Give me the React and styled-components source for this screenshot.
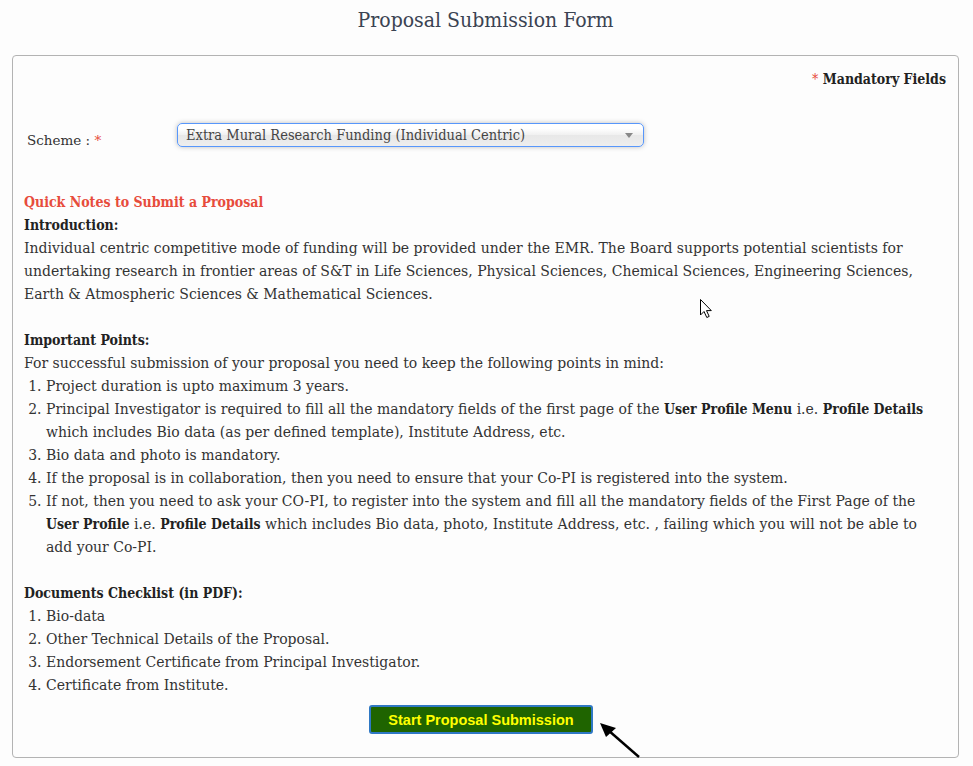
import React from 'react';
import styled, { createGlobalStyle } from 'styled-components';

const GlobalStyle = createGlobalStyle`
  html, body {
    margin: 0;
    padding: 0;
    background: #fdfdfd;
  }
  body {
    font-family: "DejaVu Serif", "Liberation Serif", serif;
    color: #333;
  }
`;

const Page = styled.div`
  position: relative;
  width: 973px;
  height: 766px;
  overflow: hidden;
  padding: 0 14px 0 12px;
  box-sizing: border-box;
`;

const Title = styled.h1`
  margin: 0;
  padding-top: 8px;
  height: 55px;
  box-sizing: border-box;
  text-align: center;
  font-size: 21px;
  font-weight: normal;
  font-stretch: condensed;
  color: #3b4352;
`;

const Panel = styled.div`
  border: 1px solid #b3b3b3;
  border-radius: 4px;
  padding: 12px 14px 0 11px;
  background: #fdfdfd;
  height: 703px;
  box-sizing: border-box;
`;

const MandatoryNote = styled.div`
  text-align: right;
  margin-right: -2px;
  font-size: 14px;
  line-height: 22px;
  font-weight: bold;
  font-stretch: condensed;
  color: #222;
`;

const Star = styled.span`
  color: #e74c3c;
  font-weight: normal;
`;

const SchemeRow = styled.div`
  display: flex;
  align-items: flex-start;
  margin-top: 33px;
  height: 68px;
`;

const Label = styled.label`
  width: 150px;
  padding-left: 3px;
  padding-top: 9px;
  font-size: 13.5px;
  color: #333;
`;

const Select = styled.div`
  width: 467px;
  height: 24px;
  box-sizing: border-box;
  display: flex;
  align-items: center;
  justify-content: space-between;
  padding: 0 10px 0 8px;
  border: 1px solid #5897fb;
  border-radius: 5px;
  background: linear-gradient(#ffffff 20%, #f0f0f0 50%, #e8e8e8 52%, #eeeeee 100%);
  box-shadow: 0 0 5px rgba(0, 0, 0, 0.25);
  font-size: 14.5px;
  font-stretch: condensed;
  color: #444;
`;

const Caret = styled.span`
  width: 0;
  height: 0;
  border-left: 4px solid transparent;
  border-right: 4px solid transparent;
  border-top: 5px solid #888;
`;

const Notes = styled.div`
  font-size: 14px;
  line-height: 23px;
  color: #333;

  b {
    color: #222;
    font-stretch: condensed;
  }
`;

const NotesTitle = styled.div`
  color: #e74c3c;
  font-weight: bold;
  font-stretch: condensed;
`;

const Heading = styled.div`
  font-weight: bold;
  font-stretch: condensed;
  color: #222;
  margin-top: ${p => (p.$gap ? '23px' : '0')};
`;

const Para = styled.p`
  margin: 0;
`;

const List = styled.ol`
  margin: 0;
  padding-left: 22px;
`;

const Item = styled.li``;

const ButtonRow = styled.div`
  display: flex;
  justify-content: center;
  margin-top: 8px;
  padding-right: 6px;
`;

const StartButton = styled.button`
  width: 224px;
  height: 29px;
  background: #1f6400;
  color: #ffff00;
  border: 2px solid #2f78c4;
  border-radius: 3px;
  font-family: "Liberation Sans", Arial, sans-serif;
  font-weight: bold;
  font-size: 14.5px;
  cursor: pointer;
`;

const Overlay = styled.svg`
  position: absolute;
  pointer-events: none;
`;

export default function App() {
  return (
    <>
      <GlobalStyle />
      <Page>
        <Title>Proposal Submission Form</Title>
        <Panel>
          <MandatoryNote>
            <Star>*</Star> Mandatory Fields
          </MandatoryNote>
          <SchemeRow>
            <Label>
              Scheme : <Star>*</Star>
            </Label>
            <Select>
              <span>Extra Mural Research Funding (Individual Centric)</span>
              <Caret />
            </Select>
          </SchemeRow>
          <Notes>
            <NotesTitle>Quick Notes to Submit a Proposal</NotesTitle>
            <Heading>Introduction:</Heading>
            <Para>
              Individual centric competitive mode of funding will be provided under the EMR. The Board
              supports potential scientists for undertaking research in frontier areas of S&amp;T in Life
              Sciences, Physical Sciences, Chemical Sciences, Engineering Sciences, Earth &amp; Atmospheric
              Sciences &amp; Mathematical Sciences.
            </Para>
            <Heading $gap>Important Points:</Heading>
            <Para>For successful submission of your proposal you need to keep the following points in mind:</Para>
            <List>
              <Item>Project duration is upto maximum 3 years.</Item>
              <Item>
                Principal Investigator is required to fill all the mandatory fields of the first page of the{' '}
                <b>User Profile Menu</b> i.e. <b>Profile Details</b> which includes Bio data (as per defined
                template), Institute Address, etc.
              </Item>
              <Item>Bio data and photo is mandatory.</Item>
              <Item>
                If the proposal is in collaboration, then you need to ensure that your Co-PI is registered into
                the system.
              </Item>
              <Item>
                If not, then you need to ask your CO-PI, to register into the system and fill all the mandatory
                fields of the First Page of the <b>User Profile</b> i.e. <b>Profile Details</b> which includes
                Bio data, photo, Institute Address, etc. , failing which you will not be able to add your Co-PI.
              </Item>
            </List>
            <Heading $gap>Documents Checklist (in PDF):</Heading>
            <List>
              <Item>Bio-data</Item>
              <Item>Other Technical Details of the Proposal.</Item>
              <Item>Endorsement Certificate from Principal Investigator.</Item>
              <Item>Certificate from Institute.</Item>
            </List>
          </Notes>
          <ButtonRow>
            <StartButton>Start Proposal Submission</StartButton>
          </ButtonRow>
        </Panel>
        <Overlay style={{ left: 699, top: 298 }} width="16" height="22" viewBox="0 0 16 22">
          <path d="M1.5 1.5 L1.5 17 L5 13.5 L7.8 19.5 L10.2 18.4 L7.5 12.6 L12.3 12.6 Z" fill="#fff" stroke="#000" strokeWidth="1" strokeLinejoin="round" />
        </Overlay>
        <Overlay style={{ left: 596, top: 718 }} width="46" height="42" viewBox="0 0 46 42">
          <line x1="43" y1="39" x2="12" y2="12" stroke="#000" strokeWidth="2.4" />
          <path d="M4 5 L20 10 L10 19 Z" fill="#000" />
        </Overlay>
      </Page>
    </>
  );
}
